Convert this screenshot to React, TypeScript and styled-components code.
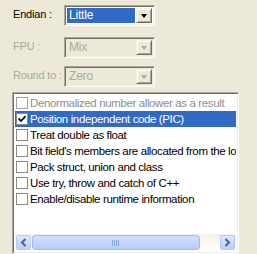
import React from 'react';
import styled, { createGlobalStyle } from 'styled-components';

const Global = createGlobalStyle`
  html, body { margin: 0; padding: 0; background: #ECE9D8; }
  body {
    font-family: "Liberation Sans", Arial, sans-serif;
    font-size: 11px;
    letter-spacing: -0.2px;
  }
  * { box-sizing: border-box; }
`;

const Page = styled.div`
  width: 257px;
  height: 254px;
  overflow: hidden;
  padding: 4px 0 0 12px;
  display: flex;
  flex-direction: column;
`;

const FieldRow = styled.div<{ $mt: number }>`
  display: flex;
  align-items: center;
  height: 21px;
  margin-top: ${(p) => p.$mt}px;
`;

const Label = styled.span<{ $disabled?: boolean }>`
  width: 52px;
  padding-left: 1px;
  white-space: nowrap;
  color: ${(p) => (p.$disabled ? '#ACA899' : '#000')};
  margin-top: -3px;
`;

const Combo = styled.div<{ $disabled?: boolean }>`
  width: 91px;
  height: 21px;
  display: flex;
  padding: 2px;
  gap: 1px;
  background: ${(p) => (p.$disabled ? '#ECE9D8' : '#fff')};
  border: 1px solid;
  border-color: #ACA899 #fff #fff #ACA899;
  box-shadow: inset 1px 1px #716F64, inset -1px -1px #F1EFE2;
`;

const ComboValue = styled.div<{ $selected?: boolean; $disabled?: boolean }>`
  flex: 1;
  padding-left: 2px;
  line-height: 15px;
  font-size: 12px;
  background: ${(p) => (p.$selected ? '#316AC5' : 'transparent')};
  color: ${(p) => (p.$selected ? '#fff' : p.$disabled ? '#ACA899' : '#000')};
`;

const DropButton = styled.div`
  width: 16px;
  height: 15px;
  display: flex;
  align-items: center;
  justify-content: center;
  background: #ECE9D8;
  border: 1px solid;
  border-color: #F1EFE2 #716F64 #716F64 #F1EFE2;
  box-shadow: inset 1px 1px #fff, inset -1px -1px #ACA899;
`;

const Arrow = styled.div<{ $disabled?: boolean }>`
  width: 0;
  height: 0;
  border-left: 3.5px solid transparent;
  border-right: 3.5px solid transparent;
  border-top: 4px solid ${(p) => (p.$disabled ? '#ACA899' : '#000')};
  margin-top: 1px;
`;

const ListBox = styled.div`
  margin-top: 5px;
  width: 227px;
  height: 162px;
  display: flex;
  flex-direction: column;
  background: #fff;
  border: 1px solid;
  border-color: #ACA899 #fff #fff #ACA899;
  box-shadow: inset 1px 1px #716F64, inset -1px -1px #F1EFE2;
  padding: 2px;
`;

const Items = styled.div`
  flex: 1;
  overflow: hidden;
`;

const Item = styled.div<{ $selected?: boolean; $disabled?: boolean }>`
  height: 16px;
  display: flex;
  align-items: center;
  padding-left: 1px;
  white-space: nowrap;
  font-size: 11.5px;
  letter-spacing: -0.38px;
  background: ${(p) => (p.$selected ? '#316AC5' : 'transparent')};
  color: ${(p) => (p.$selected ? '#fff' : p.$disabled ? '#8E8E8E' : '#000')};
`;

const Check = styled.div<{ $disabled?: boolean }>`
  width: 12px;
  height: 12px;
  flex: none;
  margin-right: 2px;
  background: #fff;
  border: 1px solid ${(p) => (p.$disabled ? '#A0A0A0' : '#8A8A8A')};
  display: flex;
  align-items: center;
  justify-content: center;
`;

const ScrollBar = styled.div`
  height: 17px;
  display: flex;
  align-items: center;
  padding: 0 1px;
  gap: 1px;
  background: linear-gradient(to bottom, #F3F1EC, #FEFEFB);
`;

const ScrollButton = styled.div`
  width: 15px;
  height: 15px;
  flex: none;
  display: flex;
  align-items: center;
  justify-content: center;
  border: 1px solid #B7CAF5;
  border-radius: 2px;
  background: linear-gradient(to bottom, #DCE7FE, #BACEFB);
`;

const Thumb = styled.div`
  width: 168px;
  height: 15px;
  flex: none;
  display: flex;
  align-items: center;
  justify-content: center;
  border: 1px solid #A3BAF0;
  border-radius: 3px;
  background: linear-gradient(to bottom, #D2DFFD, #B8CCFA);
`;

const Spacer = styled.div`
  flex: 1;
`;

const items = [
  { text: 'Denormalized number allower as a result', disabled: true },
  { text: 'Position independent code (PIC)', checked: true, selected: true },
  { text: 'Treat double as float' },
  { text: "Bit field's members are allocated from the lower bit" },
  { text: 'Pack struct, union and class' },
  { text: 'Use try, throw and catch of C++' },
  { text: 'Enable/disable runtime information' },
];

export default function App() {
  return (
    <Page>
      <Global />
      <FieldRow $mt={1}>
        <Label>Endian :</Label>
        <Combo>
          <ComboValue $selected>Little</ComboValue>
          <DropButton><Arrow /></DropButton>
        </Combo>
      </FieldRow>
      <FieldRow $mt={11}>
        <Label $disabled>FPU :</Label>
        <Combo $disabled>
          <ComboValue $disabled>Mix</ComboValue>
          <DropButton><Arrow $disabled /></DropButton>
        </Combo>
      </FieldRow>
      <FieldRow $mt={8}>
        <Label $disabled>Round to :</Label>
        <Combo $disabled>
          <ComboValue $disabled>Zero</ComboValue>
          <DropButton><Arrow $disabled /></DropButton>
        </Combo>
      </FieldRow>
      <ListBox>
        <Items>
          {items.map((it) => (
            <Item key={it.text} $selected={it.selected} $disabled={it.disabled}>
              <Check $disabled={it.disabled}>
                {it.checked && (
                  <svg width="8" height="8" viewBox="0 0 8 8">
                    <path d="M0.5 3.5 L3 6 L7.5 1.2" stroke="#000" strokeWidth="1.8" fill="none" />
                  </svg>
                )}
              </Check>
              <span>{it.text}</span>
            </Item>
          ))}
        </Items>
        <ScrollBar>
          <ScrollButton>
            <svg width="7" height="9" viewBox="0 0 7 9">
              <path d="M5.5 1 L2 4.5 L5.5 8" stroke="#4D6185" strokeWidth="2" fill="none" />
            </svg>
          </ScrollButton>
          <Thumb>
            <svg width="8" height="6" viewBox="0 0 8 6">
              {[0, 2, 4, 6].map((x) => (
                <rect key={x} x={x} y={0} width={1} height={6} fill="#8DA8E8" />
              ))}
            </svg>
          </Thumb>
          <Spacer />
          <ScrollButton>
            <svg width="7" height="9" viewBox="0 0 7 9">
              <path d="M1.5 1 L5 4.5 L1.5 8" stroke="#4D6185" strokeWidth="2" fill="none" />
            </svg>
          </ScrollButton>
        </ScrollBar>
      </ListBox>
    </Page>
  );
}
